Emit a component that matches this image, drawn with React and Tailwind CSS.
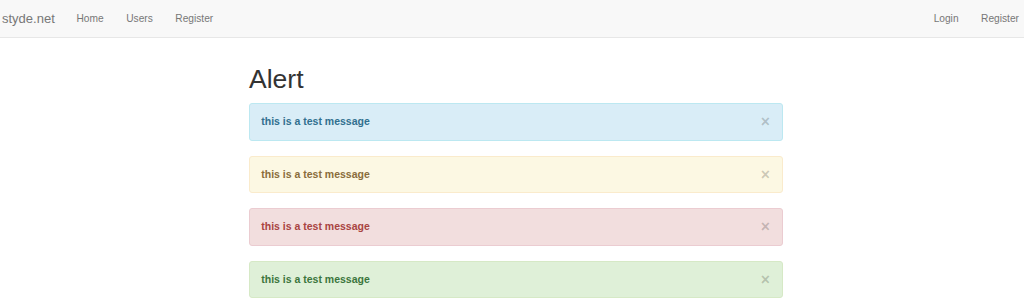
const ALERTS = [
  { id: 'info', box: 'bg-[#d9edf7] border-[#bce8f1] text-[#31708f]' },
  { id: 'warning', box: 'bg-[#fcf8e3] border-[#faebcc] text-[#8a6d3b]' },
  { id: 'danger', box: 'bg-[#f2dede] border-[#ebccd1] text-[#a94442]' },
  { id: 'success', box: 'bg-[#dff0d8] border-[#d6e9c6] text-[#3c763d]' },
];

function NavLink({ children, last }) {
  return (
    <a
      href="#"
      className={`block pt-[11.25px] pb-[11px] pl-[11.25px] leading-[15px] text-[10.2px] text-[#777] ${
        last ? 'pr-[5px]' : 'pr-[11.25px]'
      }`}
    >
      {children}
    </a>
  );
}

export default function App() {
  return (
    <div className="min-h-[306px] bg-white font-['Liberation_Sans',Arial,sans-serif] text-[#333]">
      {/* navbar */}
      <nav className="flex h-[38px] items-start justify-between border-b border-[#e7e7e7] bg-[#f8f8f8]">
        <div className="flex">
          <a href="#" className="block pl-[2px] pr-[10.5px] pt-[11.25px] text-[13px] leading-[15px] text-[#777]">
            styde.net
          </a>
          <NavLink>Home</NavLink>
          <NavLink>Users</NavLink>
          <NavLink>Register</NavLink>
        </div>
        <div className="flex">
          <NavLink>Login</NavLink>
          <NavLink last>Register</NavLink>
        </div>
      </nav>

      {/* contenido */}
      <main className="ml-[249px] w-[534px] pt-[27px]">
        <h1 className="mb-[9px] text-[26.5px] font-normal leading-[1.1]">Alert</h1>
        {ALERTS.map((a) => (
          <div
            key={a.id}
            className={`mb-[15px] flex h-[37.5px] items-center justify-between rounded-[3px] border pl-[11.25px] pr-[12px] ${a.box}`}
          >
            <strong className="text-[10.5px] leading-[15px]">this is a test message</strong>
            <button className="text-[15.75px] font-bold leading-none text-black/20">×</button>
          </div>
        ))}
      </main>
    </div>
  );
}
